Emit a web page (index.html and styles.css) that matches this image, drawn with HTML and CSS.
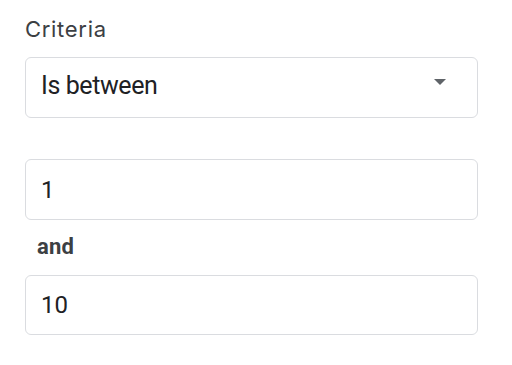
FILE: index.html
```html
<!DOCTYPE html>
<html lang="en">

<head>
    <meta charset="UTF-8">
    <meta name="viewport" content="width=device-width, initial-scale=1.0">
    <title>Criteria</title>
    <link rel="stylesheet" href="styles.css">
</head>

<body>
    <div id="panel">
        <div class="label">Criteria</div>

        <div class="field select">
            <span>Is between</span>
            <span class="arrow"></span>
        </div>

        <div class="field value">1</div>

        <div class="label bold">and</div>

        <div class="field value last">10</div>
    </div>
</body>

</html>
```

FILE: styles.css
```css
body,
html {
    margin: 0;
    background: white;
    font-family: Roboto, Arial, sans-serif;
}

#panel {
    padding: 14px 34px 0 25px;
    display: flex;
    flex-direction: column;
}

.label {
    font-family: Inter, Roboto, sans-serif;
    font-size: 22px;
    letter-spacing: 0.7px;
    color: #3c4043;
    line-height: 30px;
    margin-bottom: 13px;
}

.label.bold {
    font-family: Roboto, Arial, sans-serif;
    font-weight: bold;
    letter-spacing: 0.2px;
    margin: 12px 0 13px 12px;
}

.field {
    border: 1px solid #dadce0;
    border-radius: 6px;
    box-sizing: border-box;
    height: 61px;
    padding: 0 15px;
    display: flex;
    align-items: center;
    color: #202124;
}

.select {
    justify-content: space-between;
    padding-bottom: 5px;
    margin-bottom: 41px;
    font-size: 25px;
    letter-spacing: -0.4px;
}

.value {
    font-size: 24px;
}

.last {
    height: 60px;
}

.arrow {
    width: 0;
    height: 0;
    border-left: 6px solid transparent;
    border-right: 6px solid transparent;
    border-top: 6px solid #5f6368;
    margin-right: 16px;
    margin-bottom: 6px;
}
```
